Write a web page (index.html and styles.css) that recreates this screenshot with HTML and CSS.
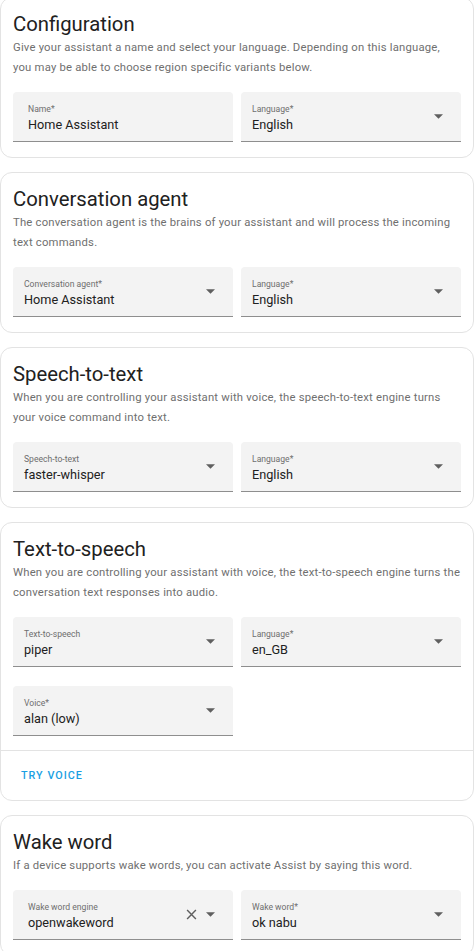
FILE: index.html
```html
<!DOCTYPE html>
<html lang="en">
<head>
  <meta charset="UTF-8">
  <title>Assist pipeline</title>
  <meta name="viewport" content="width=device-width, initial-scale=1.0">
  <link rel="stylesheet" href="styles.css">
</head>
<body>

  <div class="card first">
    <h2 class="card-title">Configuration</h2>
    <p class="card-desc">Give your assistant a name and select your language. Depending on this language, you may be able to choose region specific variants below.</p>
    <div class="row">
      <div class="field text">
        <div class="field-text">
          <span class="field-label">Name*</span>
          <span class="field-value">Home Assistant</span>
        </div>
      </div>
      <div class="field">
        <div class="field-text">
          <span class="field-label">Language*</span>
          <span class="field-value">English</span>
        </div>
        <svg class="arrow" viewBox="0 0 10 5"><path d="M0 0L5 5L10 0Z"/></svg>
      </div>
    </div>
  </div>

  <div class="card">
    <h2 class="card-title">Conversation agent</h2>
    <p class="card-desc">The conversation agent is the brains of your assistant and will process the incoming text commands.</p>
    <div class="row">
      <div class="field">
        <div class="field-text">
          <span class="field-label">Conversation agent*</span>
          <span class="field-value">Home Assistant</span>
        </div>
        <svg class="arrow" viewBox="0 0 10 5"><path d="M0 0L5 5L10 0Z"/></svg>
      </div>
      <div class="field">
        <div class="field-text">
          <span class="field-label">Language*</span>
          <span class="field-value">English</span>
        </div>
        <svg class="arrow" viewBox="0 0 10 5"><path d="M0 0L5 5L10 0Z"/></svg>
      </div>
    </div>
  </div>

  <div class="card">
    <h2 class="card-title">Speech-to-text</h2>
    <p class="card-desc">When you are controlling your assistant with voice, the speech-to-text engine turns your voice command into text.</p>
    <div class="row">
      <div class="field">
        <div class="field-text">
          <span class="field-label">Speech-to-text</span>
          <span class="field-value">faster-whisper</span>
        </div>
        <svg class="arrow" viewBox="0 0 10 5"><path d="M0 0L5 5L10 0Z"/></svg>
      </div>
      <div class="field">
        <div class="field-text">
          <span class="field-label">Language*</span>
          <span class="field-value">English</span>
        </div>
        <svg class="arrow" viewBox="0 0 10 5"><path d="M0 0L5 5L10 0Z"/></svg>
      </div>
    </div>
  </div>

  <div class="card with-actions">
    <h2 class="card-title">Text-to-speech</h2>
    <p class="card-desc">When you are controlling your assistant with voice, the text-to-speech engine turns the conversation text responses into audio.</p>
    <div class="row">
      <div class="field">
        <div class="field-text">
          <span class="field-label">Text-to-speech</span>
          <span class="field-value">piper</span>
        </div>
        <svg class="arrow" viewBox="0 0 10 5"><path d="M0 0L5 5L10 0Z"/></svg>
      </div>
      <div class="field">
        <div class="field-text">
          <span class="field-label">Language*</span>
          <span class="field-value">en_GB</span>
        </div>
        <svg class="arrow" viewBox="0 0 10 5"><path d="M0 0L5 5L10 0Z"/></svg>
      </div>
    </div>
    <div class="row second">
      <div class="field">
        <div class="field-text">
          <span class="field-label">Voice*</span>
          <span class="field-value">alan (low)</span>
        </div>
        <svg class="arrow" viewBox="0 0 10 5"><path d="M0 0L5 5L10 0Z"/></svg>
      </div>
    </div>
    <div class="card-actions">
      <button class="text-btn">Try voice</button>
    </div>
  </div>

  <div class="card">
    <h2 class="card-title">Wake word</h2>
    <p class="card-desc">If a device supports wake words, you can activate Assist by saying this word.</p>
    <div class="row">
      <div class="field text">
        <div class="field-text">
          <span class="field-label">Wake word engine</span>
          <span class="field-value">openwakeword</span>
        </div>
        <svg class="clear" viewBox="0 0 10 10"><path d="M1 1L9 9M9 1L1 9"/></svg>
        <svg class="arrow" viewBox="0 0 10 5"><path d="M0 0L5 5L10 0Z"/></svg>
      </div>
      <div class="field">
        <div class="field-text">
          <span class="field-label">Wake word*</span>
          <span class="field-value">ok nabu</span>
        </div>
        <svg class="arrow" viewBox="0 0 10 5"><path d="M0 0L5 5L10 0Z"/></svg>
      </div>
    </div>
  </div>

</body>
</html>
```

FILE: styles.css
```css
body {
  margin: 0;
  background-color: #ffffff;
  color: #212121;
  font-family: Roboto, "Noto Sans", sans-serif;
}

.card {
  border: 1px solid #e3e3e3;
  border-radius: 12px;
  padding: 12px 12px 15px 12px;
  margin-bottom: 14px;
  background-color: #ffffff;
}

.card.first {
  margin-top: -3px;
}

.card.with-actions {
  padding-bottom: 0;
}

.card-title {
  margin: 0;
  font-size: 20.3px;
  font-weight: 400;
  line-height: 28px;
  color: #212121;
}

.card-desc {
  margin: 0 0 14px 0;
  font-size: 11.3px;
  line-height: 20px;
  letter-spacing: 0.2px;
  color: #6f6f6f;
}

.row {
  display: grid;
  grid-template-columns: 1fr 1fr;
  gap: 8px;
}

.row.second {
  margin-top: 19px;
}

.field {
  display: flex;
  align-items: center;
  height: 50px;
  box-sizing: border-box;
  padding: 0 18px 0 11px;
  background-color: #f3f3f3;
  border-radius: 4px 4px 0 0;
  border-bottom: 1px solid #8e8e8e;
}

.field.text {
  padding-left: 15px;
}

.field-text {
  flex: 1;
  display: flex;
  flex-direction: column;
  padding-top: 3px;
}

.field-label {
  font-size: 8.6px;
  line-height: 13px;
  color: #6e6e6e;
}

.field-value {
  font-size: 12.7px;
  line-height: 17px;
  color: #212121;
}

.arrow {
  width: 9px;
  height: 5px;
  fill: #5f5f5f;
}

.clear {
  width: 11px;
  height: 11px;
  margin-right: 9px;
  stroke: #5f5f5f;
  stroke-width: 1.3;
}

.card-actions {
  margin: 14px -12px 0 -12px;
  border-top: 1px solid #e3e3e3;
  padding: 0 12px;
  height: 49px;
  display: flex;
  align-items: center;
}

.text-btn {
  background: none;
  border: none;
  padding: 0 8px;
  font-family: Roboto, "Noto Sans", sans-serif;
  font-size: 10.8px;
  font-weight: 500;
  letter-spacing: 1px;
  text-transform: uppercase;
  color: #1a9fe3;
  cursor: pointer;
}
```
